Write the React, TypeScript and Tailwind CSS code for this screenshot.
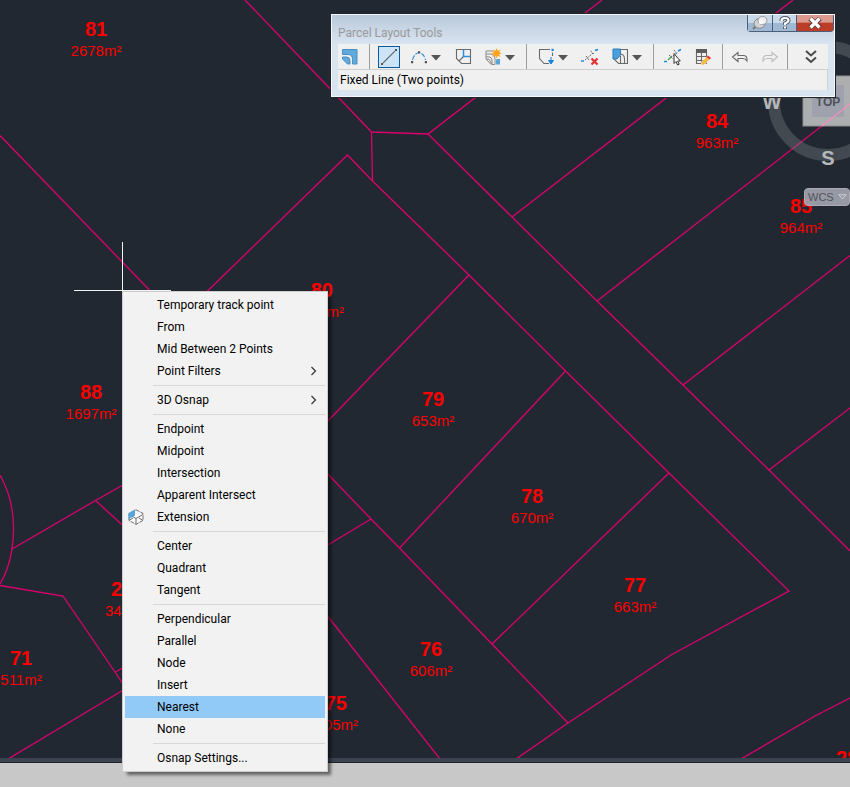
import { useState } from 'react'
import type { ReactNode } from 'react'
import { clsx } from 'clsx'

type Parcel = {
  id: string
  area: string
  x: number
  y: number
  anchor?: 'start' | 'middle' | 'end'
  areaX?: number
}

type MenuEntry = { label: string; submenu?: boolean; icon?: boolean }

const PARCELS: Parcel[] = [
  { id: '81', area: '2678m²', x: 96, y: 36 },
  { id: '84', area: '963m²', x: 717, y: 128 },
  { id: '85', area: '964m²', x: 801, y: 213 },
  { id: '80', area: 'm²', x: 333, y: 297, anchor: 'end', areaX: 344 },
  { id: '88', area: '1697m²', x: 91, y: 399 },
  { id: '79', area: '653m²', x: 433, y: 406 },
  { id: '78', area: '670m²', x: 532, y: 503 },
  { id: '77', area: '663m²', x: 635, y: 592 },
  { id: '76', area: '606m²', x: 431, y: 656 },
  { id: '75', area: '05m²', x: 347, y: 710, anchor: 'end', areaX: 358 },
  { id: '71', area: '511m²', x: 21, y: 665 },
  { id: '2', area: '34', x: 111, y: 596, anchor: 'start', areaX: 105 },
  { id: '28', area: '', x: 836, y: 765, anchor: 'start' },
]

const BOUNDARIES = [
  'M245 0L371.5 132L428 134L602 0',
  'M371.5 132L372.5 181',
  'M428 134L512 217L597 301L683 385L769 470L850 551',
  'M512 217L793 0',
  'M597 301L850 104',
  'M683 385L850 255.5',
  'M769 470L850 408',
  'M190 308L347.5 155L372.5 181L430 237L469 275L565.5 371L669 473L789 591L671 655L568 723L516 759',
  'M469 275L322 427',
  'M565.5 371L399.5 548',
  'M669 473L492 644',
  'M322 468L371 519L399.5 548L492 644L568 723',
  'M371 519L322 548.5',
  'M322 609L440 759',
  'M0 135.5L160 301',
  'M0 475Q14 500 13.5 530Q13 562 0 584',
  'M12 549L95.5 500.5L130 481',
  'M95.5 500.5L130 532',
  'M0 585.5L63 596L130 694',
  'M115.5 672L130 664',
  'M130 686L8 759',
  'M741 759L815 716L850 698',
]

const MENU: MenuEntry[][] = [
  [
    { label: 'Temporary track point' },
    { label: 'From' },
    { label: 'Mid Between 2 Points' },
    { label: 'Point Filters', submenu: true },
  ],
  [{ label: '3D Osnap', submenu: true }],
  [
    { label: 'Endpoint' },
    { label: 'Midpoint' },
    { label: 'Intersection' },
    { label: 'Apparent Intersect' },
    { label: 'Extension', icon: true },
  ],
  [{ label: 'Center' }, { label: 'Quadrant' }, { label: 'Tangent' }],
  [
    { label: 'Perpendicular' },
    { label: 'Parallel' },
    { label: 'Node' },
    { label: 'Insert' },
    { label: 'Nearest' },
    { label: 'None' },
  ],
  [{ label: 'Osnap Settings...' }],
]

function Drawing() {
  return (
    <svg className="absolute inset-0 h-full w-full" aria-label="Parcel drawing">
      <g fill="none" stroke="#dc006e" strokeWidth="1.3">
        {BOUNDARIES.map((d) => (
          <path key={d} d={d} />
        ))}
      </g>
      {PARCELS.map((p) => (
        <g key={p.id} fill="#fb0000" textAnchor={p.anchor ?? 'middle'}>
          <text x={p.x} y={p.y} className="text-[20px] font-bold">
            {p.id}
          </text>
          <text x={p.areaX ?? p.x} y={p.y + 20} className="text-[15px]">
            {p.area}
          </text>
        </g>
      ))}
      {/* Crosshair */}
      <path d="M122.5 242V291M74 290.5H171" stroke="#f2f2f2" fill="none" />
    </svg>
  )
}

function ViewCube() {
  return (
    <div className="absolute top-[36px] -right-[44px]">
      <svg width="132" height="134" viewBox="0 0 132 134">
        <circle cx="66" cy="65" r="54" fill="none" stroke="#8a8f96" strokeOpacity="0.33" strokeWidth="12" />
        <rect x="41" y="40" width="52" height="50" fill="#cfd0d1" fillOpacity="0.8" stroke="#8b8d90" />
        <rect x="50" y="49" width="32" height="32" fill="#9a9cab" fillOpacity="0.7" />
        <path d="M60 90L88 68" stroke="#f08fbe" strokeWidth="1.3" />
        <g fill="#b5b7b9" className="text-[20px] font-bold" textAnchor="middle">
          <text x="10" y="73">W</text>
          <text x="66" y="129">S</text>
        </g>
        <text x="66" y="70" textAnchor="middle" fill="#4d525b" className="text-[12px] font-bold">
          TOP
        </text>
      </svg>
    </div>
  )
}

function SnapIcon() {
  return (
    <svg width="16" height="16" viewBox="0 0 16 16" fill="none" stroke="#6c6c6c">
      <path d="M8 .8L15 4.4V11.4L8 15.4L1 11.4V4.4Z" fill="#fafafa" strokeDasharray="4 1" />
      <path d="M1 5.5L8 9.5L15 5.5M8 9.5V15.4M1 11.4L5 9M15 11.4L11 9" />
      <path d="M.5 4.2L7 .6V6.6L.5 10.2Z" fill="#55a5dc" stroke="none" />
    </svg>
  )
}

type MenuProps = { active: string; onSelect: (label: string) => void }

function SnapMenu({ active, onSelect }: MenuProps) {
  return (
    <div
      role="menu"
      className="absolute top-[291px] left-[122px] w-[206px] border border-[#cccccc] bg-[#f2f2f2] p-[2px] shadow-[4px_4px_3px_-1px_rgba(0,0,0,0.5)]"
    >
      {MENU.map((group, i) => (
        <div key={group[0].label}>
          {i > 0 && <hr className="my-[3px] ml-7 border-t border-[#d7d7d7]" />}
          {group.map((item) => (
            <button
              key={item.label}
              type="button"
              role="menuitem"
              onClick={() => onSelect(item.label)}
              className={clsx(
                'flex h-[22px] w-full items-center text-left font-[Roboto,sans-serif] text-[12px] text-black',
                active === item.label && 'bg-[#91c9f7]',
              )}
            >
              <span className="w-8 pl-[3px]">{item.icon && <SnapIcon />}</span>
              <span className="flex-1 whitespace-nowrap">{item.label}</span>
              {item.submenu && (
                <svg width="16" height="10" viewBox="0 0 16 10" fill="none" stroke="#333" strokeWidth="1.2">
                  <path d="M2.5 1L6.5 5L2.5 9" />
                </svg>
              )}
            </button>
          ))}
        </div>
      ))}
    </div>
  )
}

type ToolProps = { label: string; pressed?: boolean; children: ReactNode }

function Tool({ label, pressed, children }: ToolProps) {
  return (
    <button
      type="button"
      aria-label={label}
      title={label}
      className={clsx(
        'flex h-[22px] w-[22px] shrink-0 items-center justify-center',
        pressed && 'border border-[#0c5a9e] bg-[#cce4f7]',
      )}
    >
      <svg width="18" height="18" viewBox="0 0 18 18" fill="none" stroke="#6a6a6a" strokeWidth="1.1" className="shrink-0">
        {children}
      </svg>
    </button>
  )
}

function DropTool({ label, children }: ToolProps) {
  return (
    <div className="flex items-center">
      <Tool label={label}>{children}</Tool>
      <button type="button" aria-label={`${label} options`} className="flex h-[22px] w-[14px] items-center">
        <svg width="12" height="8" viewBox="0 0 12 8" fill="#555">
          <path d="M1 2H11L6 7.5Z" />
        </svg>
      </button>
    </div>
  )
}

function Group({ className, children }: { className: string; children: ReactNode }) {
  return <div className={clsx('flex items-center border-[#9d9d9d]', className)}>{children}</div>
}

function Toolbar() {
  return (
    <div className="flex h-[26px] border-b border-[#cfcfcf] bg-[#f0f0f0]">
      <Group className="border-r pr-2 pl-px">
        <Tool label="Parcel layout">
          <path d="M1.5 1.5H16V16H11.5V11.5Q11.5 6.5 7 6.5H1.5Z" fill="#62aadc" stroke="#4a8fc2" strokeWidth="1" />
          <path d="M1.5 9H5.5Q9 9 9 12.5V16H6.5L1.5 11Z" fill="#62aadc" stroke="#4a8fc2" strokeWidth="1" />
        </Tool>
      </Group>
      <Group className="gap-2 border-r px-2">
        <Tool label="Fixed Line" pressed>
          <path d="M3 15L15 3" />
          <path d="M1 15H3V17H1ZM15 1H17V3H15Z" fill="#555" stroke="none" />
        </Tool>
        <DropTool label="Fixed Curve">
          <path d="M2.5 12Q4 5.5 9 4.5Q14 5.5 15.5 12" stroke="#2a8fdd" strokeDasharray="5 1.5" />
          <path d="M1 13H3.2V15.2H1ZM14.8 13H17V15.2H14.8ZM8 3.2H10.2V5.4H8Z" fill="#555" stroke="none" />
        </DropTool>
        <Tool label="Draw tangent">
          <path d="M2.5 1.5H16.5V15.5H7.5L2.5 10.5ZM5 13L9.5 8.5" />
          <path d="M9.5 2V8.5H16" stroke="#2a8fdd" strokeWidth="1.5" />
        </Tool>
        <DropTool label="Slide line">
          <path d="M2 3H9M2 3V11L7 16.5M2 6H7Q11 7 11 10V16.5M2 8.8H5Q8 9.5 8 12V16.5M2 11.2H5L8 16.5H11" stroke="#8a8a8a" strokeWidth="1" />
          <path d="M12.5 11H16V16.5H12V12.5Z" fill="#58a5da" stroke="none" />
          <path d="M12.5 0L13.6 2.7L16.4 1.4L15.2 4.2L18 5.2L15.2 6.3L16.4 9L13.6 7.8L12.5 10.5L11.4 7.8L8.6 9L9.8 6.3L7 5.2L9.8 4.2L8.6 1.4L11.4 2.7Z" fill="#ffa31a" stroke="none" />
        </DropTool>
      </Group>
      <Group className="gap-2 border-r px-2">
        <DropTool label="Swing line">
          <path d="M13 1.5H2.5V10.5L7 15.5H12M15.5 4.5V8" />
          <path d="M14.5 .8H16.7V3H14.5Z" fill="#1683e0" stroke="none" />
          <path d="M14 9V13M11.5 12.5H16.5L14 16Z" fill="#1683e0" stroke="#1683e0" strokeWidth="1" />
        </DropTool>
        <Tool label="Delete sub-entity">
          <path d="M0 13H3" stroke="#1683e0" strokeWidth="1.4" />
          <path d="M4 12L12 5M5 8L8 12M9.5 3L13 6" strokeDasharray="2 1" strokeWidth="1" />
          <path d="M14 2.5L17 1.5" stroke="#1683e0" strokeWidth="1.4" />
          <path d="M10.5 10.5L16.5 16.5M16.5 10.5L10.5 16.5" stroke="#e5302e" strokeWidth="2.2" />
        </Tool>
        <DropTool label="Parcel union">
          <path d="M2.5 1.5H16.5V15.5H7.5L2.5 10.5Z" />
          <path d="M2 1H9.5V7L6 11H2Z" fill="#4aa0dc" stroke="#2f7fb9" strokeWidth="1" />
          <path d="M9.5 6Q13.5 6.5 13.5 11V15.5M9.5 8V15.5" />
        </DropTool>
      </Group>
      <Group className="gap-2 border-r px-2">
        <Tool label="Pick sub-entity">
          <path d="M0 13.5H3" stroke="#1683e0" strokeWidth="1.4" />
          <path d="M4 12L8 8" stroke="#2e9d52" />
          <path d="M9 8L14 4M5 7L9 11M10 2L13 6" strokeDasharray="2 1" strokeWidth="1" />
          <path d="M14 3L17 1.5" stroke="#1683e0" strokeWidth="1.4" />
          <path d="M10 5.5V15.5L12 13.5L13.6 17L15.2 16.2L13.6 13H16.3Z" fill="#fff" stroke="#333" strokeWidth="1" />
        </Tool>
        <Tool label="Sub-entity editor">
          <path d="M2.5 2.5H12.5V15.5H2.5ZM2.5 8.5H12.5M2.5 12.5H12.5M7.5 5V15.5" />
          <path d="M2 1H13V5H2Z" fill="#5d5d5d" stroke="none" />
          <path d="M7.5 17V14L12.5 9L15.5 11.5L10 17Z" fill="#f9b93a" stroke="#f0f0f0" strokeWidth=".6" />
          <path d="M12.5 9L14 7.5L17 10L15.5 11.5Z" fill="#e5302e" stroke="none" />
        </Tool>
      </Group>
      <Group className="gap-2 border-r px-1.5">
        <Tool label="Undo">
          <path d="M1.5 9L7 4.5V7.5H13Q16.5 8 16 13Q14.5 10.5 12 10.5H7V13.5Z" />
        </Tool>
        <Tool label="Redo">
          <path d="M16.5 9L11 4.5V7.5H5Q1.5 8 2 13Q3.5 10.5 6 10.5H11V13.5Z" stroke="#bdbdbd" />
        </Tool>
      </Group>
      <Group className="flex-1 justify-end pr-1.5">
        <Tool label="Expand the toolbar">
          <path d="M4 3L9 7.5L14 3M4 9.5L9 14L14 9.5" stroke="#4a4a4a" strokeWidth="2" />
        </Tool>
      </Group>
    </div>
  )
}

function ParcelTools() {
  return (
    <section className="absolute top-[14px] left-[331px] flex w-[504px] flex-col border border-[#f4f8fc] bg-[#d9e4f1] px-[6px] pb-[6px] outline outline-1 outline-[#22262c]">
      <header className="-mx-[6px] flex h-[29px] items-start justify-between bg-linear-to-b from-[#b9c9da] to-[#d9e4f1] pl-[6px]">
        <h1 className="pt-2.5 font-[Roboto,sans-serif] text-[12px] leading-4 text-[#999999]">Parcel Layout Tools</h1>
        <div className="flex h-[17px] rounded-b-sm border border-t-0 border-[#4d5f78]">
          <button type="button" aria-label="Pin" className="flex w-6 items-center justify-center bg-linear-to-b from-[#c9d9ea] from-50% to-[#9fb8d3] to-50%">
            <svg width="18" height="16" viewBox="0 0 18 16">
              <path d="M2 14L6 10" stroke="#777" strokeWidth="2" />
              <ellipse cx="8.5" cy="8.5" rx="5.5" ry="4.8" fill="#d2d2d2" stroke="#858585" />
              <ellipse cx="11.5" cy="5.5" rx="4.5" ry="4" fill="#eeeeee" stroke="#999" />
              <circle cx="10" cy="7" r="2.2" fill="#fafafa" />
            </svg>
          </button>
          <button type="button" aria-label="Help" className="flex w-[25px] items-center justify-center border-x border-[#4d5f78] bg-linear-to-b from-[#c9d9ea] from-50% to-[#9fb8d3] to-50%">
            <svg width="12" height="14" viewBox="0 0 12 14" fill="none">
              <path d="M2.5 5Q2.5 2 6 2Q9.5 2 9.5 4.5Q9.5 6 6 7.5V9M6 10.5V13" stroke="#4b5566" strokeWidth="4" />
              <path d="M2.5 5Q2.5 2 6 2Q9.5 2 9.5 4.5Q9.5 6 6 7.5V9M6 10.5V12.5" stroke="#fff" strokeWidth="2.2" />
            </svg>
          </button>
          <button type="button" aria-label="Close" className="flex w-9 items-center justify-center bg-linear-to-b from-[#dc9a8e] from-45% to-[#bd3c28] to-50%">
            <svg width="14" height="12" viewBox="0 0 14 12" fill="none">
              <path d="M2 1.5L12 10.5M12 1.5L2 10.5" stroke="#5b3535" strokeWidth="5" />
              <path d="M2.5 1.5L11.5 10.5M11.5 1.5L2.5 10.5" stroke="#fff" strokeWidth="3.2" />
            </svg>
          </button>
        </div>
      </header>
      <Toolbar />
      <p className="h-5 border-r border-[#d0d0d0] bg-[#f0f0f0] pl-[2px] font-[Roboto,sans-serif] text-[12px] leading-5 text-black">
        Fixed Line (Two points)
      </p>
    </section>
  )
}

export default function App() {
  const [snap, setSnap] = useState('Nearest')

  return (
    <div className="relative flex min-h-screen flex-col overflow-hidden bg-[#222831] font-['Liberation_Sans',Arial,sans-serif]">
      <main className="relative flex-1 overflow-hidden">
        <Drawing />
        <ViewCube />
        <button
          type="button"
          className="absolute top-[188px] right-0 flex h-[18px] w-[46px] items-center justify-between rounded border border-[#a9aab4] bg-[#a4a5b2]/90 pr-[2px] pl-[3px] text-[11px] text-[#4f525b]"
        >
          WCS
          <svg width="9" height="6" viewBox="0 0 9 6" fill="none" stroke="#d0d1d8">
            <path d="M.8 .8H8.2L4.5 5Z" />
          </svg>
        </button>
      </main>
      <footer className="h-[29px] border-t-4 border-[#3b4351] bg-[#c8c8c8]">
        <div className="h-px bg-[#20252d]" />
      </footer>
      <ParcelTools />
      <SnapMenu active={snap} onSelect={setSnap} />
    </div>
  )
}
